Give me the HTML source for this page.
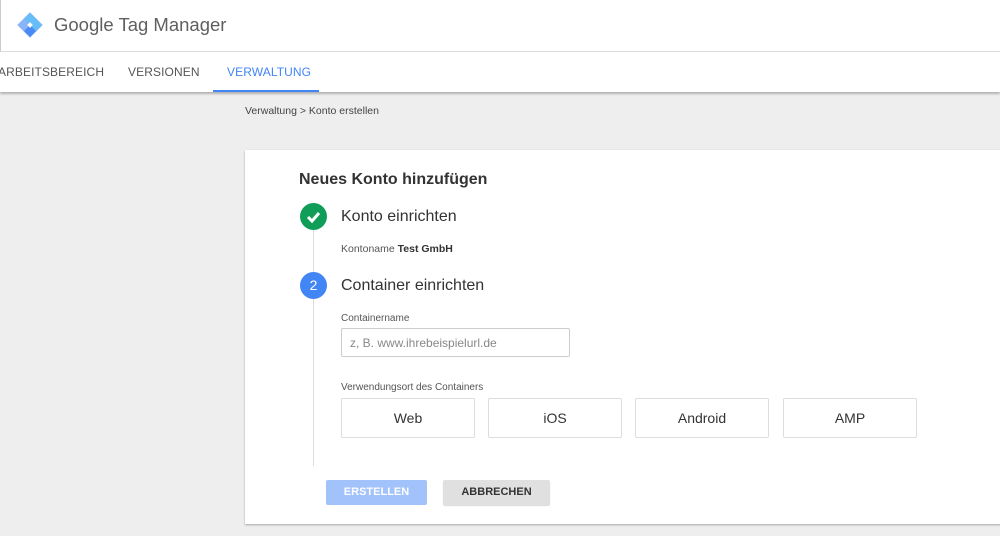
<!DOCTYPE html>
<html><head><meta charset="utf-8"><style>
*{margin:0;padding:0;box-sizing:border-box}
body{width:1000px;height:536px;overflow:hidden;background:#eeeeee;font-family:"Liberation Sans",Arial,sans-serif;position:relative}
.hdr{position:absolute;left:0;top:0;width:1000px;height:52px;background:#fff;border-left:1px solid #ccc;border-bottom:1px solid #ddd}
.logo{position:absolute;left:53px;top:14px;font-size:18.5px;color:#5f5f5f}
.nav{position:absolute;left:0;top:52px;width:1000px;height:40px;background:#fff;box-shadow:0 2px 2px rgba(0,0,0,.25)}
.nav span{position:absolute;top:13px;font-size:12px;color:#555;letter-spacing:.1px}
.ul{position:absolute;left:213px;top:38px;width:106px;height:2px;background:#4285f4}
.bc{position:absolute;left:245px;top:105px;font-size:10.5px;color:#444}
.card{position:absolute;left:245px;top:150px;width:760px;height:374px;background:#fff;box-shadow:0 1px 2px rgba(0,0,0,.3)}
.t{position:absolute;font-size:16px;color:#333}
.circ{position:absolute;left:300px;width:27px;height:27px;border-radius:50%;color:#fff;text-align:center;font-size:14px;line-height:27px}
.line{position:absolute;left:313px;top:230px;width:1px;height:236px;background:#ddd}
.sm{position:absolute;font-size:10.5px;color:#555}
.inp{position:absolute;left:341px;top:328px;width:229px;height:29px;border:1px solid #ccc;border-radius:2px;font-size:12px;color:#888;padding:7px 8px}
.b{position:absolute;top:398px;width:134px;height:40px;border:1px solid #ddd;border-radius:2px;text-align:center;line-height:38px;font-size:14px;color:#333}
.btn{position:absolute;top:480px;height:25px;border-radius:2px;font-size:11px;font-weight:bold;text-align:center;line-height:25px}
</style></head><body>
<div class="hdr">
<svg style="position:absolute;left:16px;top:12px" width="26" height="26" viewBox="0 0 26 26"><rect x="4" y="4" width="18" height="18" transform="rotate(45 13 13)" fill="#8ab4f8"/><path d="M13 25 L7 19 L13 13 L19 19 Z" fill="#4285f4" opacity=".9"/><path d="M13 1 L25 13 L19 19 L7 7 Z" fill="#4fc3f7" opacity=".6"/><rect x="11" y="11" width="4" height="4" transform="rotate(45 13 13)" fill="#fff"/></svg>
<div class="logo">Google Tag Manager</div></div>
<div class="nav"><span style="left:-2px">ARBEITSBEREICH</span><span style="left:128px">VERSIONEN</span><span style="left:227px;color:#4285f4">VERWALTUNG</span><div class="ul"></div></div>
<div class="bc">Verwaltung &gt; Konto erstellen</div>
<div class="card"></div>
<div class="t" style="left:299px;top:171px;font-weight:bold;color:#333;font-size:16px">Neues Konto hinzufügen</div>
<div class="line"></div>
<div class="circ" style="top:203px;background:#0f9d58"><svg width="27" height="27" viewBox="0 0 27 27"><path d="M8 14 L12 18 L19 10" stroke="#fff" stroke-width="3" fill="none"/></svg></div>
<div class="t" style="left:341px;top:208px">Konto einrichten</div>
<div class="sm" style="left:341px;top:243px">Kontoname <b style="color:#333">Test GmbH</b></div>
<div class="circ" style="top:272px;background:#4285f4">2</div>
<div class="t" style="left:341px;top:277px">Container einrichten</div>
<div class="sm" style="left:341px;top:313px;font-size:10px">Containername</div>
<div class="inp">z, B. www.ihrebeispielurl.de</div>
<div class="sm" style="left:341px;top:382px;font-size:10px">Verwendungsort des Containers</div>
<div class="b" style="left:341px">Web</div><div class="b" style="left:488px">iOS</div><div class="b" style="left:635px">Android</div><div class="b" style="left:783px">AMP</div>
<div class="btn" style="left:326px;width:101px;background:#a1c2fa;color:#fff">ERSTELLEN</div>
<div class="btn" style="left:443px;width:107px;background:#e0e0e0;color:#333;box-shadow:0 1px 1px rgba(0,0,0,.15)">ABBRECHEN</div>
</body></html>
